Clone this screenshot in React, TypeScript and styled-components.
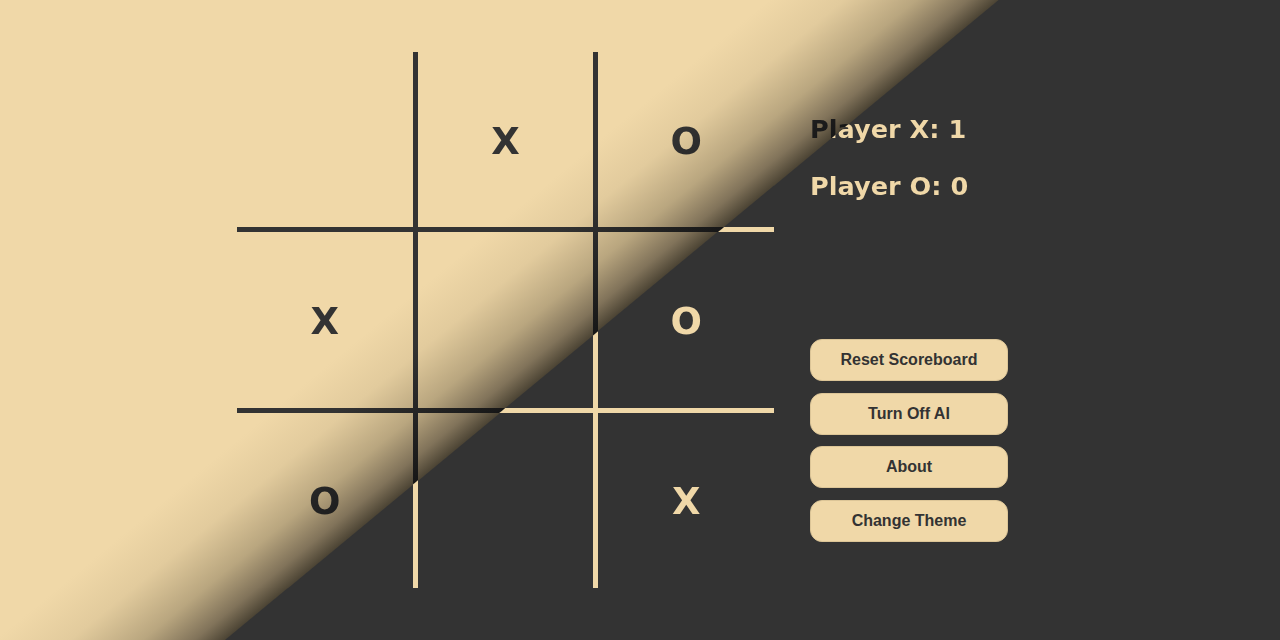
import React from 'react';
import styled, { createGlobalStyle } from 'styled-components';

const BEIGE = '#f0d8a8';
const DARK = '#333333';

// the edge sits 637px along a 140.4deg gradient line spanning the viewport
const pageGradient = `linear-gradient(140.4deg, ${BEIGE} 0px, ${BEIGE} 490px, #e2cb9d 538px, #b9a67f 584px, #81735a 617px, #4d4535 636px, ${DARK} 637px, ${DARK} 100%)`;
const inkGradient = `linear-gradient(140.4deg, ${DARK} 0px, ${DARK} 530px, #171717 636px, ${BEIGE} 637px, ${BEIGE} 100%)`;

const GlobalStyle = createGlobalStyle`
  html, body {
    margin: 0;
    height: 100%;
    overflow: hidden;
  }
  body {
    background: ${pageGradient};
    background-attachment: fixed;
    font-family: "DejaVu Sans", Verdana, sans-serif;
  }
`;

const Page = styled.main`
  box-sizing: border-box;
  height: 100vh;
  display: flex;
  align-items: center;
  justify-content: center;
  gap: 36px;
  padding-right: 35px;
`;

const Board = styled.div`
  display: grid;
  grid-template-columns: repeat(3, 175.67px);
  grid-template-rows: repeat(3, 175.33px);
  gap: 5px;
  background: ${inkGradient};
  background-attachment: fixed;
`;

const Cell = styled.div`
  display: flex;
  align-items: center;
  justify-content: center;
  padding-top: 3px;
  background: ${pageGradient};
  background-attachment: fixed;
`;

const Ink = styled.span`
  color: transparent;
  background: ${inkGradient};
  background-attachment: fixed;
  -webkit-background-clip: text;
  background-clip: text;
`;

const Mark = styled(Ink)`
  font-family: "DejaVu Sans", Verdana, sans-serif;
  font-weight: 700;
  font-size: 37px;
  line-height: 1;
`;

const Panel = styled.aside`
  align-self: stretch;
  width: 198px;
  display: flex;
  flex-direction: column;
  padding-top: 114px;
  box-sizing: border-box;
`;

const Score = styled(Ink)<{ $last?: boolean }>`
  display: block;
  font-weight: 700;
  font-size: 25.6px;
  line-height: 30px;
  white-space: nowrap;
  margin-bottom: ${({ $last }) => ($last ? '138px' : '27px')};
`;

const Buttons = styled.div`
  display: flex;
  flex-direction: column;
  gap: 11.7px;
`;

const Button = styled.button`
  height: 42px;
  width: 198px;
  border: 1px solid #dcc597;
  border-radius: 12px;
  background: ${BEIGE};
  color: ${DARK};
  font-family: "Liberation Sans", Arial, sans-serif;
  font-weight: 700;
  font-size: 16px;
  cursor: pointer;
`;

const cells = ['', 'X', 'O', 'X', '', 'O', 'O', '', 'X'];

export default function App() {
  return (
    <>
      <GlobalStyle />
      <Page>
        <Board>
          {cells.map((c, i) => (
            <Cell key={i}>{c && <Mark>{c}</Mark>}</Cell>
          ))}
        </Board>
        <Panel>
          <Score>Player X: 1</Score>
          <Score $last>Player O: 0</Score>
          <Buttons>
            <Button>Reset Scoreboard</Button>
            <Button>Turn Off AI</Button>
            <Button>About</Button>
            <Button>Change Theme</Button>
          </Buttons>
        </Panel>
      </Page>
    </>
  );
}
